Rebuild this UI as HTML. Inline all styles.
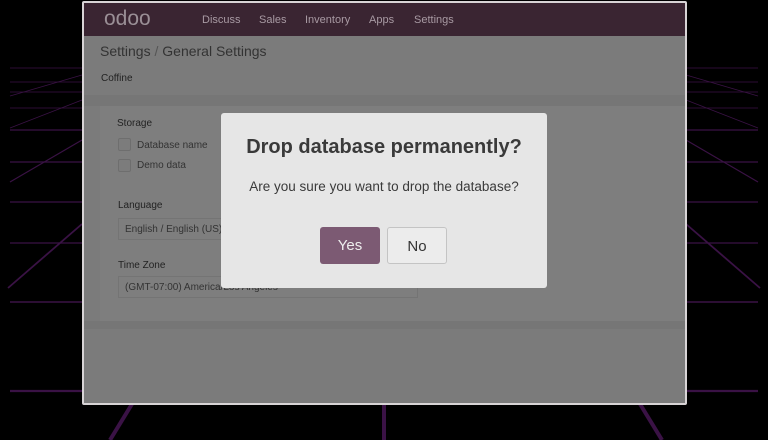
<!DOCTYPE html>
<html><head><style>
*{margin:0;padding:0;box-sizing:border-box}
body{width:768px;height:440px;background:#000;position:relative;overflow:hidden;font-family:"Liberation Sans",sans-serif}
.win{position:absolute;left:82px;top:1px;width:605px;height:404px;border:2px solid #d8d4d6;background:#7b7b7b;border-radius:2px;overflow:hidden}
.nav{height:33px;background:#3a2532;position:relative;color:#a89aa3;font-size:11px}
.nav span{position:absolute;top:11px}
.logo{position:absolute;left:20px;top:4px;font-size:21px;color:#9a8f96}
.a{position:absolute;color:#3a3a3a}
.band{position:absolute;left:0;width:605px;background:#767676}
.card{position:absolute;left:16px;top:103px;width:590px;height:215px;background:#7e7e7e}
.cb{position:absolute;width:13px;height:13px;border:1px solid #6e6e6e;border-radius:2px;background:#7c7c7c}
.inp{position:absolute;border:1px solid #747474;height:22px;background:#7e7e7e;font-size:10px;color:#333;padding:5px 6px}
.modal{position:absolute;left:221px;top:113px;width:326px;height:175px;background:#e6e6e6;border-radius:3px;text-align:center;color:#3a3a3a}
.btn{position:absolute;top:114px;height:37px;border-radius:3px;font-size:15px;line-height:37px}
</style></head><body>
<svg width="768" height="440" style="position:absolute;left:0;top:0">
<g stroke="#3a1245" stroke-width="1.2">
<line x1="10" y1="68" x2="82" y2="68" stroke-width="0.8"/><line x1="10" y1="82" x2="82" y2="82" stroke-width="0.8"/><line x1="10" y1="92" x2="82" y2="92" stroke-width="0.8"/><line x1="10" y1="108" x2="82" y2="108" stroke-width="0.8"/><line x1="10" y1="130" x2="82" y2="130"/><line x1="10" y1="162" x2="82" y2="162"/><line x1="10" y1="202" x2="82" y2="202"/><line x1="10" y1="243" x2="82" y2="243"/><line x1="10" y1="302" x2="82" y2="302" stroke-width="1.6"/><line x1="10" y1="391" x2="82" y2="391" stroke-width="2.2"/>
<line x1="686" y1="68" x2="758" y2="68" stroke-width="0.8"/><line x1="686" y1="82" x2="758" y2="82" stroke-width="0.8"/><line x1="686" y1="92" x2="758" y2="92" stroke-width="0.8"/><line x1="686" y1="108" x2="758" y2="108" stroke-width="0.8"/><line x1="686" y1="130" x2="758" y2="130"/><line x1="686" y1="162" x2="758" y2="162"/><line x1="686" y1="202" x2="758" y2="202"/><line x1="686" y1="243" x2="758" y2="243"/><line x1="686" y1="302" x2="758" y2="302" stroke-width="1.6"/><line x1="686" y1="391" x2="758" y2="391" stroke-width="2.2"/>
<line x1="10" y1="96" x2="82" y2="75" stroke-width="0.8"/><line x1="10" y1="128" x2="82" y2="100" stroke-width="0.8"/><line x1="10" y1="182" x2="82" y2="140"/><line x1="8" y1="288" x2="82" y2="224" stroke-width="1.8"/>
<line x1="758" y1="96" x2="686" y2="75" stroke-width="0.8"/><line x1="758" y1="128" x2="686" y2="100" stroke-width="0.8"/><line x1="758" y1="182" x2="686" y2="140"/><line x1="760" y1="288" x2="686" y2="224" stroke-width="1.8"/>
<line x1="110" y1="440" x2="132" y2="404" stroke-width="4"/><line x1="384" y1="440" x2="384" y2="404" stroke-width="4"/><line x1="662" y1="440" x2="640" y2="404" stroke-width="4"/>
</g></svg>
<div class="win">
<div class="nav"><div class="logo">odoo</div><span style="left:118px">Discuss</span><span style="left:175px">Sales</span><span style="left:221px">Inventory</span><span style="left:285px">Apps</span><span style="left:330px">Settings</span></div>
<div class="a" style="left:16px;top:40px;font-size:14px;color:#333">Settings <span style="color:#555">/</span> General Settings</div>
<div class="a" style="left:17px;top:70px;font-size:10px;color:#222">Coffine</div>
<div class="band" style="top:92px;height:11px"></div>
<div class="card"></div>
<div class="band" style="top:318px;height:8px"></div>
<div class="a" style="left:33px;top:115px;font-size:10px;color:#222">Storage</div>
<div class="cb" style="left:34px;top:135px"></div><div class="a" style="left:53px;top:137px;font-size:10px;color:#333">Database name</div>
<div class="cb" style="left:34px;top:156px"></div><div class="a" style="left:53px;top:157px;font-size:10px;color:#333">Demo data</div>
<div class="a" style="left:34px;top:197px;font-size:10px;color:#222">Language</div>
<div class="inp" style="left:34px;top:215px;width:300px">English / English (US)</div>
<div class="a" style="left:34px;top:257px;font-size:10px;color:#222">Time Zone</div>
<div class="inp" style="left:34px;top:273px;width:300px">(GMT-07:00) America/Los Angeles</div>
</div>
<div class="modal">
<div style="position:absolute;left:0;right:0;top:23px;font-size:20px;font-weight:bold;color:#3a3a3a">Drop database permanently?</div>
<div style="position:absolute;left:0;right:0;top:66px;font-size:13.5px;color:#3a3a3a">Are you sure you want to drop the database?</div>
<div class="btn" style="left:99px;width:60px;background:#7c5a73;color:#eee">Yes</div>
<div class="btn" style="left:166px;width:60px;border:1px solid #c4c4c4;background:#ececec;color:#333">No</div>
</div>
</body></html>
